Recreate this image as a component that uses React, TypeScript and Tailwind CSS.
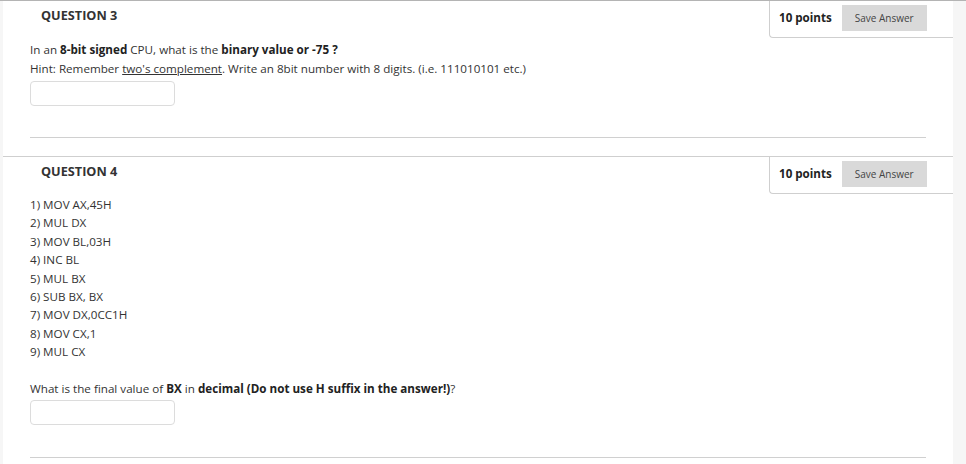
import React from "react";

const Points = () => (
  <div className="flex h-[37px] w-[184px] shrink-0 items-start rounded-bl border-b border-l border-[#cfcfcf] pl-[9px] pt-[4px]">
    <span className="whitespace-nowrap text-[11.6px] font-bold leading-[26px] text-[#222]">10 points</span>
    <button className="ml-[10px] h-[26px] w-[85px] shrink-0 whitespace-nowrap bg-[#d9d9d9] text-[10px] text-[#444]">Save Answer</button>
  </div>
);

const Header = ({ title }: { title: string }) => (
  <div className="flex items-start justify-between">
    <div className="pl-[38px] pt-[5px] text-[12.7px] font-bold leading-[18px] text-[#333]">{title}</div>
    <Points />
  </div>
);

const AnswerBox = () => (
  <div className="h-[25px] w-[145px] rounded border border-[#dcdcdc] bg-white"></div>
);

const steps = [
  "1) MOV AX,45H",
  "2) MUL DX",
  "3) MOV BL,03H",
  "4) INC BL",
  "5) MUL BX",
  "6) SUB BX, BX",
  "7) MOV DX,0CC1H",
  "8) MOV CX,1",
  "9) MUL CX",
];

export default function App() {
  return (
    <div
      className="flex h-[464px] w-[966px] overflow-hidden border-t border-[#b4b4b4] bg-[#f6f6f6] text-[11.65px] text-[#333]"
      style={{ fontFamily: '"Open Sans", Arial, sans-serif' }}
    >
      <div className="w-[3px] bg-[#f6f6f6]"></div>
      <div className="w-[950px] bg-white">
        {/* question 3 */}
        <div>
          <Header title="QUESTION 3" />
          <div className="pl-[27px] pr-[27px]">
            <div className="mt-[2px] leading-[19px]">
              In an <b className="text-[#222]">8-bit signed</b> CPU, what is the <b className="text-[#222]">binary value or -75 ?</b>
            </div>
            <div className="leading-[19px]">
              Hint: Remember <span className="underline">two's complement</span>. Write an 8bit number with 8 digits. (i.e. 111010101 etc.)
            </div>
            <div className="mt-[3px]">
              <AnswerBox />
            </div>
            <div className="mt-[31px] border-t border-[#d0d0d0]"></div>
          </div>
        </div>

        {/* question 4 */}
        <div className="mt-[18px] border-t border-[#cfcfcf]">
          <Header title="QUESTION 4" />
          <div className="pl-[27px] pr-[27px]">
            <div className="mt-[2px] leading-[18.4px]">
              {steps.map((s) => (
                <div key={s}>{s}</div>
              ))}
              <div>&nbsp;</div>
              <div>
                What is the final value of <b className="text-[#222]">BX</b> in <b className="text-[#222]">decimal (Do not use H suffix in the answer!)</b>?
              </div>
            </div>
            <div className="mt-[2px]">
              <AnswerBox />
            </div>
            <div className="mt-[32px] border-t border-[#d0d0d0]"></div>
          </div>
        </div>
      </div>
      <div className="flex-1 bg-[#f6f6f6]"></div>
    </div>
  );
}
